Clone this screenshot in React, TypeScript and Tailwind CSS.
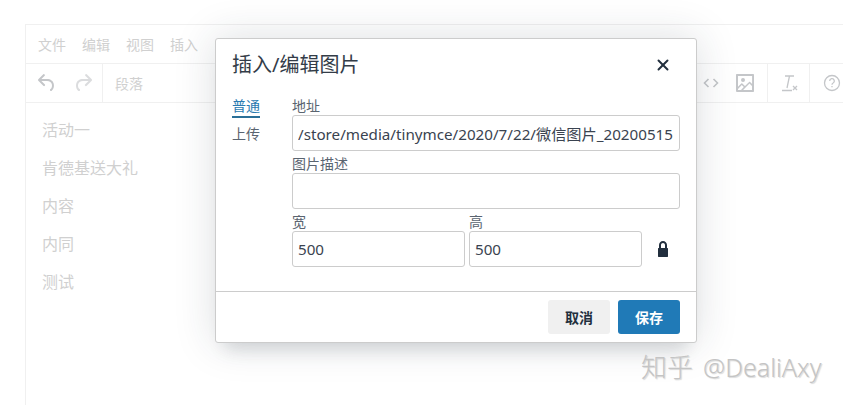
import { X } from 'lucide-react'

const menus = ['文件', '编辑', '视图', '插入']
const lines = ['活动一', '肯德基送大礼', '内容', '内同', '测试']

function Undo({ flip }: { flip?: boolean }) {
  return (
    <svg viewBox="0 0 24 24" className={`h-6 w-6 fill-[#c4c6c9] ${flip ? '-scale-x-100 opacity-60' : ''}`}>
      <path d="M6.4 8H12c3.7 0 6.2 2 6.8 5.1.6 2.7-.4 5.6-2.3 6.8a1 1 0 0 1-1-1.8c1.1-.6 1.8-2.7 1.4-4.6-.5-2.1-2.1-3.5-4.9-3.5H6.4l3.3 3.3a1 1 0 1 1-1.4 1.4l-5-5a1 1 0 0 1 0-1.4l5-5a1 1 0 0 1 1.4 1.4L6.4 8z" />
    </svg>
  )
}

function Field({ label, value, className }: { label: string; value?: string; className?: string }) {
  return (
    <label className={`flex flex-col ${className ?? ''}`}>
      <span className="mb-[1px] h-[16px] text-[14px] leading-[16px] text-[#5a6470]">{label}</span>
      <input
        readOnly
        value={value ?? ''}
        className="h-[36px] w-full rounded-[3px] border border-[#ccc] bg-white px-[5px] text-[15.2px] text-[#3a4350] outline-none"
      />
    </label>
  )
}

export default function App() {
  return (
    <div className="relative h-[405px] w-[843px] overflow-hidden bg-white font-['Noto_Sans','Noto_Sans_CJK_SC',sans-serif]">
      {/* faded editor behind the dialog */}
      <div className="ml-[25px] mt-[24px] h-[381px] border-l border-t border-[#f0f0f0] text-[#d0d0d0]">
        <div className="flex h-[39px] items-center gap-[16px] border-b border-[#f0f0f0] pl-[12px] text-[14px]">
          {menus.map((m) => (
            <span key={m}>{m}</span>
          ))}
        </div>
        <div className="flex h-[39px] items-center border-b border-[#f0f0f0]">
          <div className="flex h-full w-[77px] items-center gap-[12px] border-r border-[#f0f0f0] pl-[9px]">
            <Undo />
            <Undo flip />
          </div>
          <span className="ml-[12px] text-[14px]">段落</span>
          <div className="-mr-[11px] ml-auto flex h-full items-center">
            <div className="flex h-full w-[76px] items-center justify-end gap-[10px] border-r border-[#f0f0f0] pr-[10px]">
              <svg viewBox="0 0 24 24" className="h-6 w-6 fill-none stroke-[#c4c6c9] stroke-[1.6]">
                <path d="M9.5 8l-4 4 4 4M14.5 8l4 4-4 4" />
              </svg>
              <svg viewBox="0 0 24 24" className="h-6 w-6 fill-[#c4c6c9]">
                <path d="M5 15.7l3.3-3.2c.3-.3.7-.3 1 0L12 15l4.1-4c.3-.4.8-.4 1 0l2 1.9V5H5v10.7zM5 18V19h3l2.8-2.9-2-2L5 17.9zm14-3l-2.5-2.4-6.4 6.5H19v-4zM4 3h16c.6 0 1 .4 1 1v16c0 .6-.4 1-1 1H4a1 1 0 0 1-1-1V4c0-.6.4-1 1-1zm6 8a2 2 0 1 0 0-4 2 2 0 0 0 0 4z" />
              </svg>
            </div>
            <div className="flex h-full w-[42px] items-center justify-center border-r border-[#f0f0f0]">
              <svg viewBox="0 0 24 24" className="h-6 w-6 fill-none stroke-[#c4c6c9]">
                <path d="M8 5h9M12.5 5l-2.5 12M5 19.5h10M16 15l4 4M20 15l-4 4" strokeWidth="1.3" />
              </svg>
            </div>
            <div className="flex h-full w-[44px] items-center justify-center">
              <svg viewBox="0 0 24 24" className="h-6 w-6 fill-none stroke-[#c4c6c9] stroke-[1.3]">
                <circle cx="12" cy="12" r="7.5" />
                <path d="M9.7 10a2.3 2.3 0 1 1 3.4 2c-.8.4-1.1.9-1.1 1.8M12 15v1.2" />
              </svg>
            </div>
          </div>
        </div>
        <div className="pl-[16px] pt-[8px] text-[16px] leading-[38px]">
          {lines.map((l) => (
            <p key={l}>{l}</p>
          ))}
        </div>
      </div>

      {/* dialog */}
      <div className="absolute left-[215px] top-[38px] flex h-[305px] w-[482px] flex-col rounded-[3px] border border-[#ccc] bg-white text-[#222f3e] shadow-[0_16px_16px_-10px_rgba(34,47,62,0.15),0_0_40px_1px_rgba(34,47,62,0.15)]">
        <div className="flex h-[52px] items-center justify-between pl-[16px] pr-[24px]">
          <h1 className="text-[20px] font-normal leading-[24px] text-[#333c48]">插入/编辑图片</h1>
          <X className="h-[18px] w-[18px] text-[#222f3e]" strokeWidth={2.6} />
        </div>
        <div className="flex h-[200px] pl-[16px] pr-[16px] pt-[7px]">
          <div className="w-[60px] text-[14px] leading-[16px]">
            <div className="w-[28px] border-b-2 border-[#2a6f97] pb-[2px] text-[#2a7ab0]">普通</div>
            <div className="mt-[8px] text-[#5a6470]">上传</div>
          </div>
          <div className="flex flex-1 flex-col gap-[5px]">
            <Field label="地址" value="/store/media/tinymce/2020/7/22/微信图片_20200515103412.jpg" />
            <Field label="图片描述" />
            <div className="flex items-end">
              <Field label="宽" value="500" className="w-[173px]" />
              <Field label="高" value="500" className="ml-[4px] w-[173px]" />
              <div className="flex h-[36px] flex-1 items-center justify-center pl-[4px]">
                <svg viewBox="0 0 24 24" className="h-[24px] w-[24px] fill-[#222f3e]">
                  <path d="M16.3 11c.2 0 .3 0 .5.2.2.2.2.3.2.5v7.6c0 .2 0 .3-.2.5-.2.2-.3.2-.5.2H7.7c-.2 0-.3 0-.5-.2-.2-.2-.2-.3-.2-.5v-7.6c0-.2 0-.3.2-.5.2-.2.3-.2.5-.2H8V8c0-2.2 1.8-4 4-4s4 1.8 4 4v3h.3zM10 8v3h4V8c0-1.1-.9-2-2-2s-2 .9-2 2z" />
                </svg>
              </div>
            </div>
          </div>
        </div>
        <div className="flex flex-1 items-center justify-end gap-[8px] border-t border-[#ccc] px-[16px]">
          <button className="h-[34px] w-[62px] rounded-[3px] bg-[#f0f0f0] text-[14px] font-bold text-[#222f3e]">取消</button>
          <button className="h-[34px] w-[62px] rounded-[3px] bg-[#207ab7] text-[14px] font-bold text-white">保存</button>
        </div>
      </div>

      {/* watermark */}
      <div className="absolute left-[641px] top-[351px] flex items-center gap-[10px] whitespace-nowrap font-light leading-[32px] text-[#c4c4c4] [text-shadow:1px_1px_1px_rgba(0,0,0,0.15)]">
        <span className="text-[26px]">知乎</span>
        <span className="text-[25px]">@DealiAxy</span>
      </div>
    </div>
  )
}
